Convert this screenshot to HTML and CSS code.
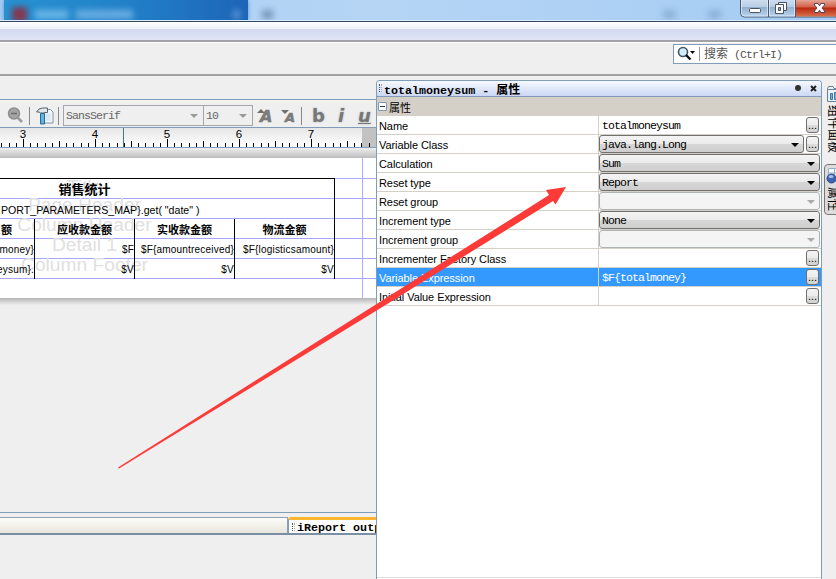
FILE: index.html
```
<!DOCTYPE html>
<html lang="zh-CN">
<head>
  <meta charset="UTF-8" />
  <title>iReport</title>
  <link rel="stylesheet" href="styles.css">
</head>
<body>

  <!-- Window title bar -->
  <div class="titlebar">
    <div class="glass">
      <div class="glass-tab">
        <span class="blob red"></span>
        <span class="blob label1"></span>
        <span class="blob label2"></span>
        <span class="blob close"></span>
      </div>
      <span class="blob plus"></span>
      <span class="blob tool"></span>
      <span class="blob tool"></span>
    </div>
    <div class="window-buttons">
      <svg width="96" height="18" viewBox="0 0 96 18">
        <defs>
          <linearGradient id="btn" x1="0" y1="0" x2="0" y2="1"><stop offset="0" stop-color="#d4e2f2"/><stop offset=".45" stop-color="#b9cde4"/><stop offset=".5" stop-color="#93b0cf"/><stop offset="1" stop-color="#bcd6ef"/></linearGradient>
          <linearGradient id="red" x1="0" y1="0" x2="0" y2="1"><stop offset="0" stop-color="#e4a596"/><stop offset=".4" stop-color="#d4644c"/><stop offset=".5" stop-color="#bb2a11"/><stop offset="1" stop-color="#d8714f"/></linearGradient>
        </defs>
        <path d="M.5-2V13q0 4 4 4H96V-2z" fill="url(#btn)" stroke="#495a70"/>
        <path d="M55.500 0H96V16.500H55.500z" fill="url(#red)"/>
        <path d="M28.500 0V17M55.500 0V17" stroke="#495a70"/>
        <path d="M1.500 0V13q0 3 3 3H27.500V0M29.500 0V16H54.500V0" fill="none" stroke="#e6f0fa" opacity=".7"/>
        <rect x="9.500" y="8.500" width="11" height="4" rx="1" fill="#fff" stroke="#4a5362"/>
        <path d="M38.500 2.500h8v8h-8z" fill="#fff" stroke="#4a5362"/>
        <path d="M35.500 4.500h8v9h-8z" fill="#fff" stroke="#4a5362"/>
        <path d="M38.500 7.500h2v3h-2z" fill="#8ba7c5" stroke="#4a5362"/>
        <path d="M74.500 3.500h3.500l1.500 2.300L81 3.500h3.500v1.500L82 8l2.500 3v1.500H81l-1.500-2.300L78 12.500h-3.500V11L77 8l-2.500-3z" fill="#fff" stroke="#53485a"/>
      </svg>
    </div>
  </div>
  <div class="menubar"></div>

  <!-- Quick search -->
  <div class="topbar">
    <div class="search">
      <svg width="20" height="16" viewBox="0 0 20 16">
        <circle cx="6" cy="6" r="4.500" fill="#d5ecf7" stroke="#42566a" stroke-width="1.600"/>
        <path d="M9 9l4.500 4.500" stroke="#111" stroke-width="2.400"/>
        <path d="M13 5h5l-2.500 3z" fill="#000"/>
      </svg>
      <span class="search-text"><span class="cn">搜索</span> (Ctrl+I)</span>
    </div>
  </div>

  <div class="workspace">
    <div class="left">
      <div class="toolbar">
        <svg class="zoom-icon" width="18" height="18" viewBox="0 0 18 18">
          <circle cx="7" cy="6.500" r="5.500" fill="#a5a5a5" stroke="#8e8e8e" stroke-width="1.500"/>
          <path d="M4 6.500h6" stroke="#6f6f6f" stroke-width="1.600"/>
          <path d="M10.500 10.500l4.500 4.500" stroke="#9b9b9b" stroke-width="2.600"/>
        </svg>
        <i class="sep"></i>
        <svg class="hammer-icon" width="18" height="18" viewBox="0 0 18 18">
          <path d="M7.500 2.500h7l2.500 2.500v11H7.500z" fill="#eef5fb" stroke="#8794a0"/>
          <path d="M9.500 6.500v7h5v-7z" fill="#d9e6f1"/>
          <path d="M.5 5q2-4 6-4h5v4.500H8.500V6H4.500L3 5z" fill="#e3e7ea" stroke="#59636c"/>
          <path d="M4.500 6.500h4v10.500H4.500z" fill="#62b5df" stroke="#246b98"/>
        </svg>
        <i class="sep"></i>
        <div class="combo font-name">SansSerif<i class="caret"></i></div>
        <div class="combo font-size">10<i class="caret"></i></div>
        <svg class="grow-icon" width="17" height="18" viewBox="0 0 17 18">
          <text x="3" y="15" class="glyph big">A</text><path d="M0 6l4-4 4 4z" fill="#6f6f6f"/>
        </svg>
        <svg class="shrink-icon" width="16" height="18" viewBox="0 0 16 18">
          <text x="4" y="15" class="glyph small">A</text><path d="M0 3h8l-4 4z" fill="#6f6f6f"/>
        </svg>
        <i class="sep"></i>
        <span class="style b">b</span>
        <span class="style i">i</span>
        <span class="style u">u</span>
      </div>

      <div class="ruler">
        <svg width="376" height="19" viewBox="0 0 376 19" shape-rendering="crispEdges">
          <rect x="362" width="14" height="19" fill="#c2c2c2"/>
          <g id="ticks" stroke="#000"></g>
          <path d="M123.500 0V19" stroke="#3d8080"/>
          <g class="ruler-num">
            <text x="23" y="10">3</text><text x="95" y="10">4</text><text x="167" y="10">5</text><text x="239" y="10">6</text><text x="311" y="10">7</text>
          </g>
        </svg>
      </div>

      <!-- Report designer -->
      <div class="page-top"></div>
      <div class="page">
        <div class="band-line first"></div>
        <div class="band title">
          <span class="ghost">Title</span>
          <span class="heading">销售统计</span>
        </div>
        <div class="band param">
          <span class="ghost">Page Header</span>
          <span class="expr">PORT_PARAMETERS_MAP}.get( "date" )</span>
        </div>
        <div class="band cells head">
          <span class="ghost">Column Header</span>
          <span class="cell c0">额</span><span class="cell">应收款金额</span><span class="cell">实收款金额</span><span class="cell">物流金额</span>
        </div>
        <div class="band cells">
          <span class="ghost">Detail 1</span>
          <span class="cell c0">money}</span><span class="cell">$F</span><span class="cell">$F{amountreceived}</span><span class="cell">$F{logisticsamount}</span>
        </div>
        <div class="band cells">
          <span class="ghost">Column Footer</span>
          <span class="cell c0">eysum}.</span><span class="cell">$V</span><span class="cell">$V</span><span class="cell">$V</span>
        </div>
        <div class="margin-line"></div>
      </div>
      <div class="page-shadow"></div>
      <div class="canvas-rest"></div>

      <div class="output-tabs">
        <div class="tab-empty"></div>
        <div class="tab-active"><i class="grip"></i>iReport outp</div>
      </div>
    </div>

    <!-- Properties dock -->
    <div class="dock">
      <div class="dock-title">
        <i class="grip"></i>
        <span class="dock-name">totalmoneysum - <span class="cn">属性</span></span>
        <svg width="26" height="12" viewBox="0 0 26 12">
          <circle cx="4" cy="5" r="3" fill="#333"/>
          <path d="M17 3l5 5M22 3l-5 5" stroke="#222" stroke-width="2"/>
        </svg>
      </div>
      <div class="group"><i class="collapse"></i>属性</div>
      <div class="row"><div class="key">Name</div><div class="val"><span class="plain">totalmoneysum</span><b class="dots">...</b></div></div>
      <div class="row"><div class="key">Variable Class</div><div class="val"><div class="select">java.lang.Long<i class="caret"></i></div><b class="dots">...</b></div></div>
      <div class="row"><div class="key">Calculation</div><div class="val"><div class="select">Sum<i class="caret"></i></div></div></div>
      <div class="row"><div class="key">Reset type</div><div class="val"><div class="select">Report<i class="caret"></i></div></div></div>
      <div class="row"><div class="key">Reset group</div><div class="val"><div class="select disabled"><i class="caret"></i></div></div></div>
      <div class="row"><div class="key">Increment type</div><div class="val"><div class="select">None<i class="caret"></i></div></div></div>
      <div class="row"><div class="key">Increment group</div><div class="val"><div class="select disabled"><i class="caret"></i></div></div></div>
      <div class="row"><div class="key">Incrementer Factory Class</div><div class="val"><span class="plain"></span><b class="dots">...</b></div></div>
      <div class="row selected"><div class="key">Variable Expression</div><div class="val"><span class="plain">$F{totalmoney}</span><b class="dots">...</b></div></div>
      <div class="row"><div class="key">Initial Value Expression</div><div class="val"><span class="plain"></span><b class="dots">...</b></div></div>
      <div class="dock-rest"></div>
    </div>

    <div class="sidebar">
      <div class="side-tab">
        <svg width="16" height="16" viewBox="0 0 16 16">
          <path d="M.5 2.500V15.500H15V2.500H7l-1-2H1.500z" fill="#eaf2f8" stroke="#66819a"/>
          <path d="M1 3.500h14" stroke="#66819a"/>
          <path d="M3.500 7.500h2v6h-2zM7.500 6.500h2v7h-2z" fill="#7fb2d8" stroke="#41759c"/>
        </svg>
        <span>组件面板</span>
      </div>
      <div class="side-tab active">
        <svg width="16" height="16" viewBox="0 0 16 16">
          <path d="M2.500.5h13v13h-13zM2.500 5h13M8.500.5v13" fill="#fff" stroke="#8fb0cf"/>
          <circle cx="5.500" cy="10.500" r="4.500" fill="#3d65b5" stroke="#2c4b8e"/>
          <ellipse cx="5" cy="8.500" rx="2.500" ry="1.500" fill="#a9c2ee"/>
        </svg>
        <span>属性</span>
      </div>
    </div>
  </div>

  <!-- Red pointer arrow -->
  <svg class="arrow" width="836" height="579" viewBox="0 0 836 579">
    <path d="M118 467.500L549 195L546 190L566 187L555.500 204.500L553 201L388 303.500L119 468.500z" fill="#fc3b38"/>
  </svg>

  <script>
    // 72px per inch, ten divisions each
    const ticks = document.getElementById('ticks');
    let d = '';
    for (let n = -3; n < 49; n++) {
      const x = Math.round(23 + n * 7.2) + 0.5;
      const h = n % 10 === 0 ? 8 : n % 5 === 0 ? 6 : 4;
      d += 'M' + x + ' 19v-' + h;
    }
    ticks.innerHTML = '<path d="' + d + '"/>';
  </script>
</body>
</html>
```
FILE: styles.css
```
* { box-sizing: border-box; }
body {
  margin: 0;
  width: 836px;
  height: 579px;
  overflow: hidden;
  position: relative;
  background: #efefef;
  font-family: "Liberation Sans", "Noto Sans CJK SC", sans-serif;
  font-size: 11px;
  color: #000;
}
svg { display: block; flex: none; }
.cn { font-family: "Noto Sans CJK SC", sans-serif; }

/* title bar */
.titlebar {
  height: 22px;
  display: flex;
  background: linear-gradient(90deg, #a8cdf2, #b6d5f5 45%, #a4ccf3);
  border-bottom: 1px solid #35485f;
  box-shadow: inset 0 -1px #dcebf9;
}
.glass {
  width: 740px;
  height: 20px;
  display: flex;
  align-items: center;
  overflow: hidden;
}
.glass-tab {
  width: 244px;
  height: 20px;
  margin-left: 4px;
  padding: 8px 8px 0;
  display: flex;
  align-items: center;
  background: linear-gradient(90deg, #2793d2, #2280c8 50%, #1d65b8);
  box-shadow: 0 0 4px #4f94d4;
  flex: none;
}
.blob { height: 9px; filter: blur(3px); flex: none; }
.blob.red { width: 15px; height: 15px; background: #9c3348; border: 4px solid #753853; }
.blob.label1 { width: 33px; margin-left: 8px; background: #69b5e6; }
.blob.label2 { width: 57px; margin-left: 8px; background: #69ade2; }
.blob.close { width: 7px; margin-left: auto; background: #5793d3; }
.blob.plus { width: 11px; margin: 9px 390px 0 14px; background: #7695b8; }
.blob.tool { width: 13px; margin: 9px 32px 0 0; background: #799fc7; opacity: .6; }
.window-buttons { width: 96px; height: 18px; }
.menubar {
  height: 20px;
  background: linear-gradient(#fff, #eef1f8 7px, #d3daee 7px, #dfe4f6);
  border-bottom: 2px solid #a0a2a8;
}
.topbar {
  height: 34px;
  border-top: 1px solid #fff;
  border-bottom: 2px solid #a0a0a0;
  display: flex;
  justify-content: flex-end;
  padding-top: 1px;
}
.search {
  width: 163px;
  height: 20px;
  border: 1px solid #7f9db9;
  border-right: 0;
  background: #fff;
  display: flex;
  align-items: center;
  padding-left: 3px;
}
.search-text {
  margin-left: 2px;
  padding-left: 4px;
  border-left: 1px solid #999;
  font: 11.5px/12px "Liberation Mono", monospace;
  letter-spacing: -.9px;
  color: #555;
  white-space: pre;
}
.search-text .cn { font-size: 12px; letter-spacing: 0; }

.workspace { display: flex; height: 503px; }

/* editor side */
.left {
  width: 376px;
  padding-top: 23px;
  flex: none;
  overflow: hidden;
}
.toolbar {
  height: 29px;
  border-top: 1px solid #7f9db9;
  border-bottom: 1px solid #7f9db9;
  background: linear-gradient(#f6f4ec, #efefef 4px);
  display: flex;
  align-items: center;
  padding: 4px 0 0 7px;
}
.sep { width: 1px; height: 18px; background: #888; flex: none; }
.zoom-icon { margin-right: 4px; }
.hammer-icon { margin: 0 4px 0 6px; }
.combo {
  height: 21px;
  border: 1px solid #a5a5ab;
  display: flex;
  align-items: center;
  justify-content: space-between;
  padding: 0 5px 0 2px;
  font: 11.5px "Liberation Mono", monospace;
  letter-spacing: -.9px;
  color: #666;
  flex: none;
}
.font-name { width: 141px; margin-left: 4px; }
.font-size { width: 50px; margin-left: -1px; }
.caret {
  border: 4px solid transparent;
  border-top-color: #000;
  border-bottom: 0;
  flex: none;
}
.combo .caret { border-top-color: #9a9a9a; }
.grow-icon { margin-left: 4px; }
.shrink-icon { margin: 0 4px 0 7px; }
.glyph {
  font-family: "DejaVu Sans", sans-serif;
  font-weight: bold;
  font-style: italic;
  fill: #7b7b7b;
  stroke: #7b7b7b;
  stroke-width: .6px;
}
.glyph.big { font-size: 16px; }
.glyph.small { font-size: 13px; }
.style {
  font: bold 18px/20px "DejaVu Sans", sans-serif;
  color: #777;
  text-shadow: 0 0 2px #aaa;
  flex: none;
}
.style.b { margin-left: 10px; }
.style.i { margin-left: 13px; font-style: italic; }
.style.u { margin-left: 14px; font-style: italic; text-decoration: underline; }
.ruler {
  height: 20px;
  background: linear-gradient(#e6e6e6, #fff);
  border-bottom: 1px solid #7f9db9;
}
.ruler-num {
  font: 11.5px "Liberation Sans", sans-serif;
  text-anchor: middle;
}
.page-top { height: 10px; background: linear-gradient(#efefef, #bcbcbc); }
.page {
  height: 140px;
  padding-top: 20px;
  background: #fff;
  position: relative;
}
.band-line { width: 376px; height: 1px; background: linear-gradient(90deg, #000 335px, #aaf 335px); }
.band {
  height: 20px;
  position: relative;
  border-bottom: 1px solid #a6a6fa;
  display: flex;
  align-items: center;
}
.band::after {
  content: "";
  position: absolute;
  left: 334px;
  top: 0;
  width: 1px;
  height: 20px;
  background: #000;
}
.ghost {
  position: absolute;
  left: 0;
  top: -4px;
  width: 169px;
  text-align: center;
  font-size: 19.2px;
  line-height: 20px;
  color: #dfdfdf;
  white-space: nowrap;
}
.title .ghost { top: -2px; }
.heading, .expr { position: relative; }
.heading {
  width: 169px;
  text-align: center;
  font: bold 13px/19px "Noto Sans CJK SC", sans-serif;
}
.expr { font-size: 10.6px; white-space: nowrap; letter-spacing: 0; padding: 2px 0 0 1px; }
.cell {
  position: relative;
  width: 100px;
  height: 20px;
  line-height: 21px;
  border-right: 1px solid #000;
  text-align: right;
  letter-spacing: .2px;
  font-size: 10px;
  white-space: nowrap;
  flex: none;
}
.cell.c0 { width: 35px; display: flex; justify-content: flex-end; }
.head .cell { text-align: center; font: bold 11px/20px "Noto Sans CJK SC", sans-serif; letter-spacing: 0; }
.head .c0 { padding-right: 22px; }
.margin-line {
  position: absolute;
  left: 362px;
  top: 0;
  width: 1px;
  height: 140px;
  background: #aaf;
}
.page-shadow { height: 7px; background: linear-gradient(#b5b5b5, #efefef); }
.canvas-rest { height: 208px; border-bottom: 1px solid #7f9db9; }
.output-tabs {
  height: 22px;
  padding-top: 4px;
  display: flex;
  border-bottom: 2px solid #7c90a5;
}
.tab-empty {
  width: 288px;
  border: 1px solid #8ba1b5;
  border-width: 1px 1px 0 0;
  background: linear-gradient(#fdfdf8, #e8e6dd);
  flex: none;
}
.tab-active {
  width: 88px;
  border-left: 1px solid #7f9db9;
  border-top: 3px solid #fcb52f;
  border-top-left-radius: 3px;
  background: #fff;
  display: flex;
  overflow: hidden;
  white-space: pre;
  padding-left: 3px;
  font: bold 11.7px/17px "Liberation Mono", monospace;
}
.grip {
  width: 3px;
  height: 8px;
  border-left: 1px dotted #555;
  border-right: 1px dotted #aaa;
  margin: 3px 2px 0 0;
  flex: none;
}

/* properties */
.dock {
  width: 446px;
  height: 499px;
  margin-top: 4px;
  border: 1px solid #7f9db9;
  border-bottom: 0;
  border-radius: 4px 4px 0 0;
  overflow: hidden;
  display: flex;
  flex-direction: column;
  background: #fff;
  flex: none;
}
.dock-title {
  height: 16px;
  flex: none;
  background: linear-gradient(#f6f9ff, #cbd7f3);
  border-bottom: 1px solid #8299bb;
  display: flex;
  overflow: hidden;
  padding: 2px 1px 0 2px;
}
.dock-name {
  font: bold 11.7px/16px "Liberation Mono", monospace;
  white-space: nowrap;
}
.dock-name .cn { font-size: 12px; line-height: 12px; }
.dock-title svg { margin-left: auto; }
.dock-title .grip { margin-top: 1px; }
.group {
  height: 19px;
  flex: none;
  background: #d4d0c8;
  display: flex;
  align-items: center;
  padding-left: 1px;
  font-size: 11px;
}
.collapse {
  width: 9px;
  height: 9px;
  border: 1px solid #8297b0;
  border-radius: 1px;
  margin-right: 2px;
  background: linear-gradient(#335, #335) center / 5px 1px no-repeat #fff;
}
.row {
  height: 19px;
  flex: none;
  display: flex;
  border-bottom: 1px solid #d4d0c8;
}
.key {
  width: 222px;
  border-right: 1px solid #d4d0c8;
  padding-left: 2px;
  line-height: 20px;
  letter-spacing: -.07px;
  white-space: nowrap;
}
.val {
  width: 221px;
  display: flex;
  font: 11.5px/20px "Liberation Mono", monospace;
  letter-spacing: -.9px;
}
.plain { flex: 1; padding-left: 3px; }
.select {
  flex: 1;
  height: 18px;
  border: 1px solid #707070;
  border-radius: 3px;
  background: linear-gradient(#f4f4f4, #ebebeb 48%, #d7d7d7 50%, #cecece);
  display: flex;
  align-items: center;
  padding: 1px 4px 0 2px;
}
.select .caret { margin: 1px 0 0 auto; }
.select.disabled { border-color: #adb2b5; background: #f4f4f4; }
.select.disabled .caret { border-top-color: #aaa; }
.dots {
  width: 13px;
  height: 16px;
  margin: 1px 1px 0 2px;
  border: 1px solid #707070;
  border-radius: 3px;
  background: linear-gradient(#f4f4f4, #ececec 48%, #dcdcdc 50%, #d2d2d2);
  font: 11px/15px "Liberation Sans", sans-serif;
  letter-spacing: 0;
  text-align: center;
  color: #000;
}
.selected { background: #39f; color: #fff; }
.dock-rest { flex: 1; border-bottom: 1px solid #dcdcdc; margin-bottom: 1px; }

/* minimized window buttons */
.sidebar { width: 14px; overflow: hidden; padding: 9px 0 0 2px; }
.side-tab {
  width: 22px;
  height: 76px;
  padding: 1px 0 0 3px;
}
.side-tab span {
  display: block;
  margin-top: 3px;
  writing-mode: vertical-rl;
  text-orientation: sideways;
  font: 12px/14px "Noto Sans CJK SC", sans-serif;
}
.side-tab.active {
  margin-top: 3px;
  height: 51px;
  border: 1px solid #777;
  border-radius: 4px;
  background: #dcdcdc;
  padding: 3px 0 0 1px;
}
.side-tab.active span { margin-left: 1px; }

.arrow {
  position: absolute;
  left: 0;
  top: 0;
  pointer-events: none;
}
```
